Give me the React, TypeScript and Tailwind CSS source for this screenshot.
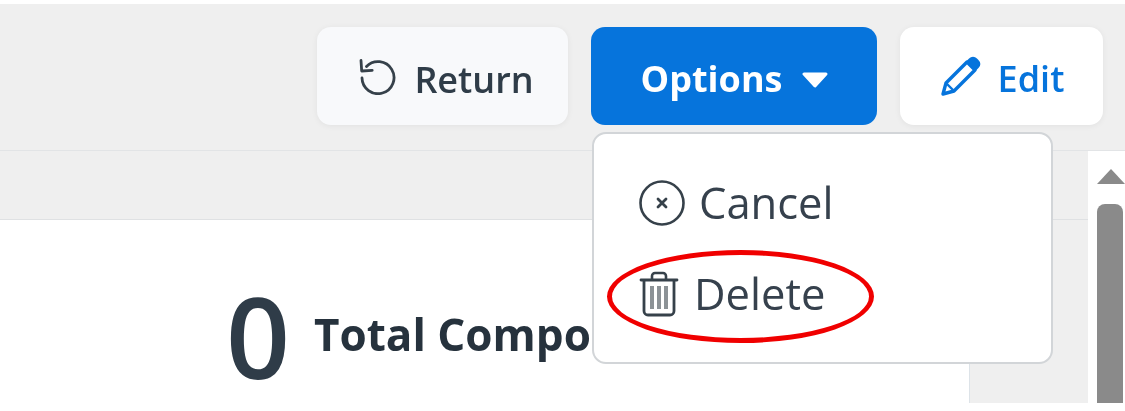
import React from "react";

function ReturnIcon() {
  return (
    <svg width="38" height="38" viewBox="0 0 38 38" fill="none" stroke="#36414a" strokeWidth="2.8">
      <path d="M8.5 9.5A16 16 0 1 1 4 21" strokeLinecap="round" />
      <path d="M3 3.5l.7 10.5 10.5-.7" strokeLinecap="round" strokeLinejoin="round" />
    </svg>
  );
}

function PencilIcon() {
  return (
    <svg width="42" height="42" viewBox="0 0 42 42" fill="none">
      <path d="M3 39l3-11L27 7l8 8-21 21z" stroke="#0674dc" strokeWidth="3.4" strokeLinejoin="round" />
      <path d="M27 7l3-3a4 4 0 0 1 6 0l2 2a4 4 0 0 1 0 6l-3 3z" fill="#0674dc" stroke="#0674dc" strokeWidth="2" strokeLinejoin="round" />
      <path d="M6 28l8 8" stroke="#0674dc" strokeWidth="2.4" />
    </svg>
  );
}

function CancelIcon() {
  return (
    <svg width="46" height="46" viewBox="0 0 46 46" fill="none" stroke="#36414a">
      <circle cx="23" cy="23" r="21.5" strokeWidth="2.6" />
      <path d="M19 19l8 8M27 19l-8 8" strokeWidth="2.8" strokeLinecap="round" />
    </svg>
  );
}

function TrashIcon() {
  return (
    <svg width="40" height="46" viewBox="0 0 40 46" fill="none" stroke="#36414a">
      <path d="M2 9h36" strokeWidth="2.8" strokeLinecap="round" />
      <path d="M13 8V5a3 3 0 0 1 3-3h8a3 3 0 0 1 3 3v3" strokeWidth="2.6" />
      <path d="M5 9v31a4 4 0 0 0 4 4h22a4 4 0 0 0 4-4V9" strokeWidth="2.8" />
      <path d="M13 15v23M20 15v23M27 15v23" stroke="#8c9296" strokeWidth="4" />
    </svg>
  );
}

export default function App() {
  return (
    <div className="w-[1125px] h-[411px] overflow-hidden bg-white pt-[4px] pb-[8px] font-['Open_Sans','Noto_Sans',sans-serif] relative blur-[0.45px]">
      {/* Cabecera */}
      <div className="h-[147px] bg-[#efefef] border-b border-[#e2e4e6] flex justify-end gap-[23px] pt-[23px] pr-[22px]">
        <button className="w-[251px] h-[98px] bg-[#f8f9fb] rounded-[14px] shadow-[0_1px_6px_rgba(0,0,0,0.06)] flex items-center justify-center gap-[18px] pl-[7px] text-[36px] font-semibold text-[#2f3c48]">
          <ReturnIcon />
          <span className="pt-[7px]">Return</span>
        </button>
        <button className="w-[286px] h-[98px] bg-[#0674dc] rounded-[14px] flex items-center justify-center gap-[20px] pl-[1px] text-[36px] font-bold text-white">
          <span className="pt-[6px]">Options</span>
          <svg width="26" height="16" viewBox="0 0 26 16" fill="#fff" className="mt-[8px]">
            <path d="M2 2h22L13 14z" stroke="#fff" strokeWidth="3" strokeLinejoin="round" />
          </svg>
        </button>
        <button className="w-[203px] h-[98px] bg-white rounded-[14px] shadow-[0_1px_6px_rgba(0,0,0,0.06)] flex items-center justify-center gap-[16px] pl-[1px] text-[36px] font-semibold text-[#0674dc]">
          <PencilIcon />
          <span className="pt-[6px]">Edit</span>
        </button>
      </div>

      <div className="flex h-[252px]">
        {/* Contenido */}
        <div className="flex-1 flex flex-col">
          <div className="h-[69px] bg-[#efefef] border-b border-[#dfe1e3]" />
          <div className="flex-1 flex">
            <div className="w-[970px] bg-white border-r border-[#dde3e8] flex items-start gap-[24px] pl-[226px] pt-[60px]">
              <span className="text-[112px] leading-[112px] font-semibold text-[#2f3c48]">0</span>
              <span className="text-[44px] leading-[50px] font-bold text-[#26323d] whitespace-nowrap mt-[29px]">
                Total Components
              </span>
            </div>
            <div className="flex-1 bg-[#efefef]" />
          </div>
        </div>

        {/* Barra de scroll */}
        <div className="w-[37px] bg-white flex flex-col items-start pl-[9px] pt-[18px] gap-[20px]">
          <div className="w-0 h-0 border-x-[14px] border-x-transparent border-b-[15px] border-b-[#8a8a8a]" />
          <div className="w-[26px] flex-1 bg-[#8a8a8a] rounded-t-[8px]" />
        </div>
      </div>

      {/* Menu desplegable */}
      <div className="absolute left-[592px] top-[132px] w-[461px] h-[232px] bg-white border-2 border-[#d2d5d8] rounded-[14px] text-[43.5px] text-[#36414d]">
        <div className="flex items-center gap-[14px] pl-[45px] pt-[45px]">
          <CancelIcon />
          <span className="leading-[48px]">Cancel</span>
        </div>
        <div className="flex items-center gap-[15px] pl-[45px] pt-[43px]">
          <TrashIcon />
          <span className="leading-[48px]">Delete</span>
        </div>
      </div>

      {/* Marca roja */}
      <div className="absolute left-[607px] top-[250px] w-[267px] h-[93px] border-[5px] border-[#f00000] rounded-[50%]" />
    </div>
  );
}
